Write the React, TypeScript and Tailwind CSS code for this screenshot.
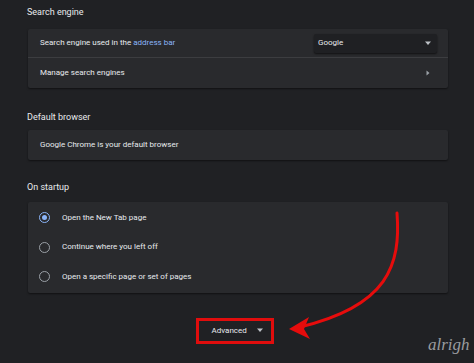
import React from "react";

const Caret = () => (
  <svg width="8" height="5" viewBox="0 0 8 5" className="block">
    <path d="M1 0.5 L4 4 L7 0.5 Z" fill="#bdc1c6" />
  </svg>
);

const Radio = ({ checked }: { checked?: boolean }) =>
  checked ? (
    <div className="w-[11px] h-[11px] rounded-full border-[1.5px] border-[#8ab4f8] flex items-center justify-center">
      <div className="w-[5px] h-[5px] rounded-full bg-[#8ab4f8]" />
    </div>
  ) : (
    <div className="w-[11px] h-[11px] rounded-full border-[1.5px] border-[#9aa0a6]" />
  );

export default function App() {
  return (
    <div
      className="relative w-[474px] h-[363px] overflow-hidden bg-[#202124] text-[#e8eaed]"
      style={{ fontFamily: "Roboto, 'Liberation Sans', sans-serif" }}
    >
      <div className="pl-[28px] w-[448px] flex flex-col">
        <div className="h-[29px] flex items-center text-[9px] -ml-px pb-[3px]">Search engine</div>
        <div className="bg-[#292a2d] rounded-[2px] shadow-[0_1px_2px_rgba(0,0,0,0.5)] text-[8px]">
          <div className="h-[29px] flex items-center px-[12px] justify-between border-b border-[#3c3d40]">
            <span>
              Search engine used in the <span className="text-[#8ab4f8]">address bar</span>
            </span>
            <div className="w-[123px] h-[19px] bg-[#1f2023] rounded-[2px] shadow-[0_1px_2px_rgba(0,0,0,0.6)] flex items-center justify-between pl-[4px] pr-[5px] -mr-[1px]">
              <span>Google</span>
              <Caret />
            </div>
          </div>
          <div className="h-[30px] flex items-center px-[12px] justify-between">
            <span>Manage search engines</span>
            <svg width="4" height="6" viewBox="0 0 4 6" className="mr-[6px]">
              <path d="M0.5 0.5 L3.5 3 L0.5 5.5 Z" fill="#9aa0a6" />
            </svg>
          </div>
        </div>

        <div className="h-[42px] flex items-end pb-[6px] text-[9px] -ml-px">Default browser</div>
        <div className="bg-[#292a2d] rounded-[2px] shadow-[0_1px_2px_rgba(0,0,0,0.5)] text-[8px] h-[30px] flex items-center px-[12px]">
          Google Chrome is your default browser
        </div>

        <div className="h-[42px] flex items-end pb-[8px] text-[9px] -ml-px">On startup</div>
        <div className="bg-[#292a2d] rounded-[2px] shadow-[0_1px_2px_rgba(0,0,0,0.5)] text-[8px] pt-[1px] pb-[1px]">
          {[
            { label: "Open the New Tab page", checked: true },
            { label: "Continue where you left off" },
            { label: "Open a specific page or set of pages" },
          ].map((r) => (
            <div key={r.label} className="h-[29.5px] flex items-center pl-[11px] gap-[12px]">
              <Radio checked={r.checked} />
              <span>{r.label}</span>
            </div>
          ))}
        </div>

        <div className="flex justify-center pt-[25px] pr-[0px]">
          <div className="ml-[-7px] w-[78px] h-[26px] border-[3px] border-[#e00d0d] flex items-center justify-between pl-[13px] pr-[7px] text-[8px] bg-[#202124]">
            <span>Advanced</span>
            <Caret />
          </div>
        </div>
      </div>

      <svg className="absolute inset-0 pointer-events-none" width="474" height="363" viewBox="0 0 474 363">
        <path
          d="M397 213 C401 265 388 306 300 327"
          fill="none"
          stroke="#e60c0c"
          strokeWidth="3"
          strokeLinecap="round"
        />
        <path d="M289 329 L309 317 L304 329 L310 339 Z" fill="#e60c0c" />
      </svg>

      <div
        className="absolute left-[428px] top-[336px] text-[17px] leading-none italic text-[#9a9b9f]"
        style={{ fontFamily: "'Liberation Serif', serif" }}
      >
        alrigh
      </div>
    </div>
  );
}
